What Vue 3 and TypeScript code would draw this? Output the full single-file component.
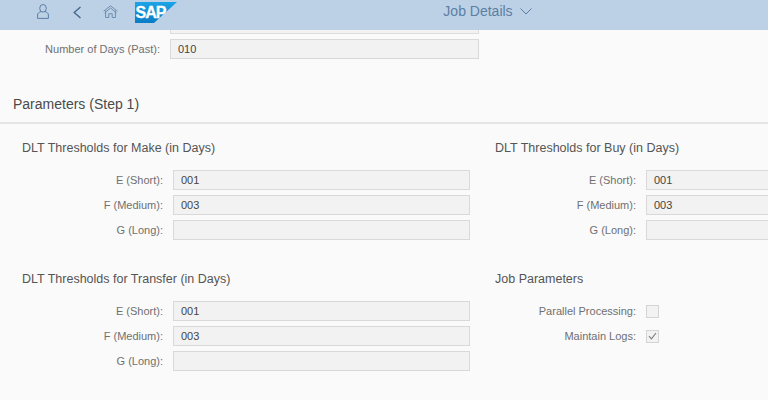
<script setup lang="ts">
interface Row { label: string; value: string }
const rows = (a: string, b: string): Row[] => [
  { label: 'E (Short):', value: a },
  { label: 'F (Medium):', value: b },
  { label: 'G (Long):', value: '' },
]
const thresholds = rows('001', '003')
</script>

<template>
  <div class="page">
    <header class="shell">
      <div class="shell-left">
        <svg class="ico user" width="12" height="15" viewBox="0 0 12 15" fill="none" stroke="#5b7fa3" stroke-width="1">
          <ellipse cx="6" cy="4.300" rx="3.300" ry="3.800" />
          <path d="M4 7.600C2 8.300.6 9.200.6 11v3.400h10.800V11c0-1.800-1.400-2.700-3.400-3.400" />
        </svg>
        <svg class="ico back" width="9" height="13" viewBox="0 0 9 13" fill="none" stroke="#41688f" stroke-width="1.400">
          <path d="M7.500 1 1.200 6.500l6.300 5.500" />
        </svg>
        <svg class="ico home" width="15" height="13" viewBox="0 0 15 13" fill="none" stroke="#6d8fb0" stroke-width="1">
          <path d="M.6 6.200 7.500.8l6.900 5.400M2.600 5.500V12.500h3.200v-3.800h3.400v3.800h3.200V5.500M1.500 8 7.500 3l6 5" />
        </svg>
        <svg class="logo" width="42" height="21" viewBox="0 0 42 21">
          <defs>
            <linearGradient id="sapg" x1="0" y1="0" x2="0" y2="1">
              <stop offset="0" stop-color="#1ca4e6" />
              <stop offset="1" stop-color="#0a7cc4" />
            </linearGradient>
          </defs>
          <path d="M0 0h42L19 21H0z" fill="url(#sapg)" />
          <text x="0.500" y="16" class="logo-text">SAP</text>
        </svg>
      </div>
      <div class="shell-title">
        <span>Job Details</span>
        <svg width="12" height="7" viewBox="0 0 12 7" fill="none" stroke="#5b7fa3" stroke-width="1">
          <path d="M.5.5 6 6l5.500-5.500" />
        </svg>
      </div>
    </header>

    <main class="content">
      <div class="top-field">
        <div class="clipped-input"></div>
        <div class="top-row">
          <label>Number of Days (Past):</label>
          <div class="input">010</div>
        </div>
      </div>

      <h2 class="section-title">Parameters (Step 1)</h2>

      <div class="grid">
        <section class="group">
          <h3>DLT Thresholds for Make (in Days)</h3>
          <div v-for="r in thresholds" :key="r.label" class="row">
            <label>{{ r.label }}</label>
            <div class="input">{{ r.value }}</div>
          </div>
        </section>
        <section class="group">
          <h3>DLT Thresholds for Buy (in Days)</h3>
          <div v-for="r in thresholds" :key="r.label" class="row">
            <label>{{ r.label }}</label>
            <div class="input open">{{ r.value }}</div>
          </div>
        </section>
        <section class="group">
          <h3>DLT Thresholds for Transfer (in Days)</h3>
          <div v-for="r in thresholds" :key="r.label" class="row">
            <label>{{ r.label }}</label>
            <div class="input">{{ r.value }}</div>
          </div>
        </section>
        <section class="group">
          <h3>Job Parameters</h3>
          <div class="row">
            <label>Parallel Processing:</label>
            <div class="check"></div>
          </div>
          <div class="row">
            <label>Maintain Logs:</label>
            <div class="check">
              <svg width="9" height="8" viewBox="0 0 9 8" fill="none" stroke="#7d7d7d" stroke-width="1.100">
                <path d="M1 4.200 3.400 6.800 8 1" />
              </svg>
            </div>
          </div>
        </section>
      </div>
    </main>
  </div>
</template>

<style>
html, body { margin: 0; background: #fafafa; }
</style>

<style scoped>
.page {
  width: 768px;
  height: 400px;
  overflow: hidden;
  background: #fafafa;
  font-family: "Liberation Sans", Arial, sans-serif;
  color: #666;
}
.shell {
  box-sizing: border-box;
  height: 30px;
  background: #bdd1e6;
  position: relative;
  display: flex;
  justify-content: center;
  padding-left: 207px;
}
.shell-left {
  position: absolute;
  left: 37px;
  top: 0;
  display: flex;
  align-items: flex-start;
}
.user { margin-top: 4px; }
.back { margin: 6px 0 0 24px; }
.home { margin: 5px 0 0 21px; }
.logo { margin: 2px 0 0 17px; }
.logo-text {
  font-family: "Liberation Sans", Arial, sans-serif;
  font-weight: 700;
  font-size: 16px;
  fill: #fff;
  stroke: #fff;
  stroke-width: 0.3px;
  letter-spacing: -1px;
}
.shell-title {
  display: flex;
  align-items: center;
  gap: 7px;
  font-size: 14px;
  color: #5b7fa3;
  height: 22px;
}
.content { display: flex; flex-direction: column; }
.top-field { padding-left: 170px; }
.clipped-input {
  width: 307px;
  height: 3px;
  background: #f2f2f2;
  border: 1px solid #dcdcdc;
  border-top: 0;
}
.top-row {
  display: flex;
  align-items: center;
  margin: 5px 0 0 -170px;
}
.top-row label {
  width: 160px;
  text-align: right;
  margin-right: 10px;
  font-size: 11px;
  color: #707070;
}
.top-row .input { width: 309px; }
.input {
  box-sizing: border-box;
  height: 20px;
  line-height: 18px;
  background: #f2f2f2;
  border: 1px solid #d9d9d9;
  padding-left: 7px;
  font-size: 11px;
  color: #444;
}
.section-title {
  margin: 36px 0 0;
  height: 27px;
  padding-left: 13px;
  font-size: 14px;
  line-height: 18px;
  font-weight: 400;
  color: #4a4a4a;
  border-bottom: 2px solid #e5e5e5;
}
.grid {
  display: grid;
  grid-template-columns: 473px 295px;
  grid-template-rows: 131px auto;
  padding-left: 22px;
  margin-top: 15px;
}
.group { min-width: 0; overflow: hidden; }
.group h3 {
  margin: 0 0 13px;
  font-size: 12.500px;
  line-height: 18px;
  font-weight: 400;
  color: #555;
}
.row {
  display: flex;
  align-items: center;
  height: 20px;
  margin-bottom: 5px;
}
.row label {
  width: 141px;
  flex: none;
  text-align: right;
  font-size: 11px;
  color: #707070;
  margin-right: 10px;
}
.group .input { width: 297px; flex: none; }
.check {
  box-sizing: border-box;
  width: 13px;
  height: 13px;
  background: #f2f2f2;
  border: 1px solid #d4d4d4;
  display: flex;
  align-items: center;
  justify-content: center;
}
</style>
